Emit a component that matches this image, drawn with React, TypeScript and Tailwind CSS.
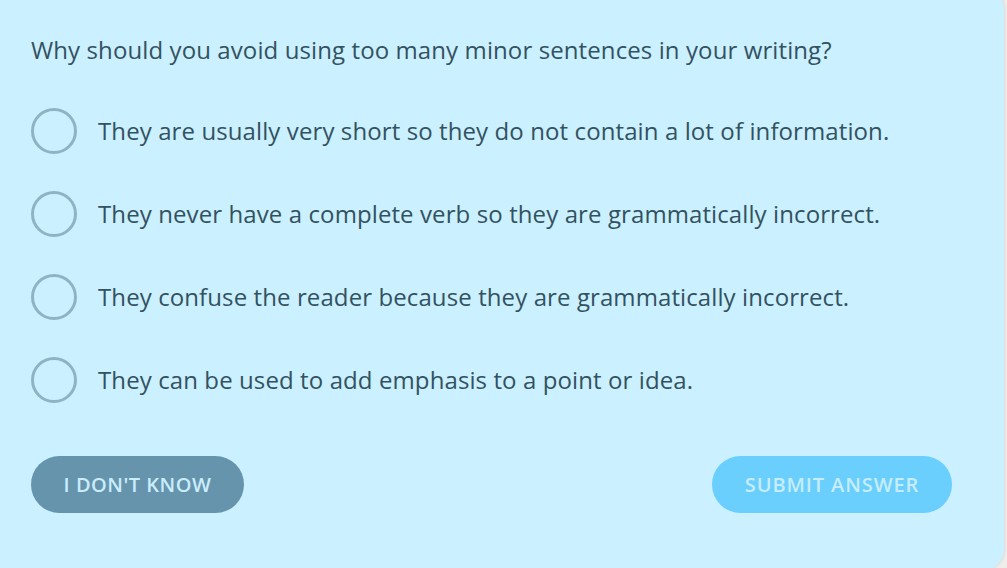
import React from "react";

const options = [
  "They are usually very short so they do not contain a lot of information.",
  "They never have a complete verb so they are grammatically incorrect.",
  "They confuse the reader because they are grammatically incorrect.",
  "They can be used to add emphasis to a point or idea.",
];

export default function App() {
  return (
    <div className="w-[1007px] h-[568px] overflow-hidden bg-[#efedea]" style={{ fontFamily: "'Open Sans', Lato, sans-serif" }}>
      <div className="-mt-[13px] w-[1004px] h-[584px] rounded-r-[22px] bg-[#cbf0ff] shadow-[1px_0_3px_rgba(0,0,0,0.08)] pl-[31px] pr-[52px] pt-[48px] flex flex-col">
        <p className="text-[24px] leading-[30px] tracking-[0.1px] text-[#33525f]">
          Why should you avoid using too many minor sentences in your writing?
        </p>
        <div className="mt-[43px] flex flex-col gap-[37px]">
          {options.map((o) => (
            <div key={o} className="flex items-center gap-[21px]">
              <div className="w-[46px] h-[46px] rounded-full border-[3px] border-[#8db4c4] shrink-0" />
              <span className="text-[24px] leading-[30px] tracking-[0.1px] text-[#33525f]">{o}</span>
            </div>
          ))}
        </div>
        <div className="mt-[53px] flex justify-between">
          <button className="w-[213px] h-[57px] rounded-full bg-[#6694ad] text-[#c9edfb] text-[20px] font-semibold tracking-[0.5px]">
            I DON'T KNOW
          </button>
          <button className="w-[240px] h-[57px] rounded-full bg-[#6bcffd] text-[#c6edfb] text-[20px] font-semibold tracking-[0.9px]">
            SUBMIT ANSWER
          </button>
        </div>
      </div>
    </div>
  );
}
